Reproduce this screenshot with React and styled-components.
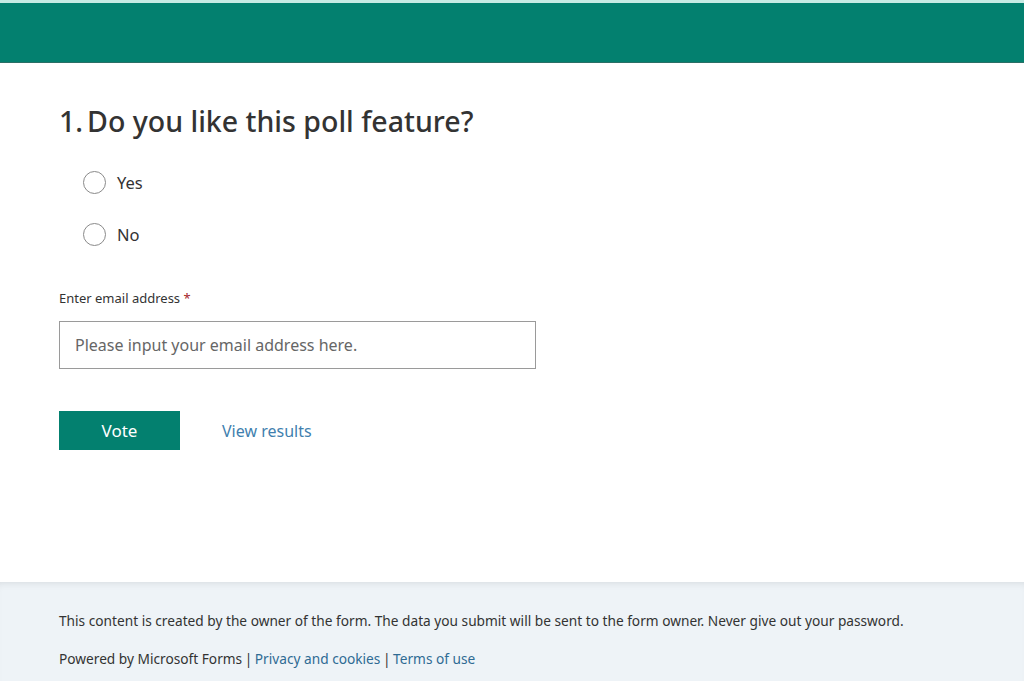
import React, { useState } from 'react';
import styled, { createGlobalStyle } from 'styled-components';

const GlobalStyle = createGlobalStyle`
  html, body {
    margin: 0;
    padding: 0;
    background: #ffffff;
    font-family: "Noto Sans", "Open Sans", sans-serif;
    color: #333333;
  }
`;

const Page = styled.div`
  display: flex;
  flex-direction: column;
  min-height: 100vh;
`;

const Banner = styled.header`
  height: 59px;
  background: #03806f;
  border-top: 3px solid #c6ebe4;
  border-bottom: 1px solid #2b6f66;
`;

const Main = styled.main`
  height: 519px;
  padding: 39px 59px 0;
  box-sizing: border-box;
  background: #ffffff;
`;

const Title = styled.h1`
  display: flex;
  gap: 4px;
  margin: 0 0 30px;
  font-size: 28.5px;
  line-height: 38px;
  font-weight: 500;
  color: #333333;
`;

const Options = styled.div`
  display: flex;
  flex-direction: column;
  gap: 28px;
  padding-left: 24px;
`;

const Option = styled.label`
  display: flex;
  align-items: center;
  gap: 11px;
  height: 24px;
  font-size: 16.5px;
  color: #333333;
  cursor: pointer;
`;

const Radio = styled.span`
  width: 23px;
  height: 23px;
  border-radius: 50%;
  border: 1px solid #8a8a8a;
  box-sizing: border-box;
  background: ${props => (props.checked ? 'radial-gradient(circle, #03806f 0 5px, #fff 6px)' : '#fff')};
`;

const FieldLabel = styled.div`
  margin-top: 43px;
  font-size: 13px;
  line-height: 18px;
  color: #333333;
`;

const Required = styled.span`
  color: #a4262c;
`;

const EmailInput = styled.input`
  display: block;
  margin-top: 14px;
  width: 477px;
  height: 48px;
  box-sizing: border-box;
  padding: 0 15px;
  border: 1px solid #9a9a9a;
  font-family: inherit;
  font-size: 16px;
  color: #333333;
  outline: none;

  &::placeholder {
    color: #666666;
  }
`;

const Actions = styled.div`
  display: flex;
  align-items: center;
  gap: 42px;
  margin-top: 42px;
`;

const VoteButton = styled.button`
  width: 121px;
  height: 39px;
  border: none;
  background: #03806f;
  color: #ffffff;
  font-family: inherit;
  font-size: 17px;
  cursor: pointer;
`;

const LinkButton = styled.a`
  font-size: 16px;
  color: #3f7fae;
  text-decoration: none;
  cursor: pointer;
`;

const Footer = styled.footer`
  flex: 1;
  padding: 29px 59px 0;
  background: #eef3f7;
  box-shadow: inset 0 6px 8px -6px rgba(0, 0, 0, 0.12);
  font-size: 13.7px;
  color: #333333;
`;

const FooterLine = styled.p`
  margin: 0 0 18px;
  line-height: 20px;
`;

const Divider = styled.span`
  margin: 0 -1px;
`;

const FooterLink = styled.a`
  color: #2f6b94;
  text-decoration: none;
`;

const App = () => {
  const [choice, setChoice] = useState(null);

  return (
    <Page>
      <GlobalStyle />
      <Banner />
      <Main>
        <Title>
          <span>1.</span>
          <span>Do you like this poll feature?</span>
        </Title>
        <Options>
          {['Yes', 'No'].map(label => (
            <Option key={label} onClick={() => setChoice(label)}>
              <Radio checked={choice === label} />
              {label}
            </Option>
          ))}
        </Options>
        <FieldLabel>
          Enter email address <Required>*</Required>
        </FieldLabel>
        <EmailInput placeholder="Please input your email address here." />
        <Actions>
          <VoteButton>Vote</VoteButton>
          <LinkButton>View results</LinkButton>
        </Actions>
      </Main>
      <Footer>
        <FooterLine>
          This content is created by the owner of the form. The data you submit will be sent to the form owner. Never give out your password.
        </FooterLine>
        <FooterLine>
          Powered by Microsoft Forms <Divider>|</Divider> <FooterLink>Privacy and cookies</FooterLink> <Divider>|</Divider> <FooterLink>Terms of use</FooterLink>
        </FooterLine>
      </Footer>
    </Page>
  );
};

export default App;
